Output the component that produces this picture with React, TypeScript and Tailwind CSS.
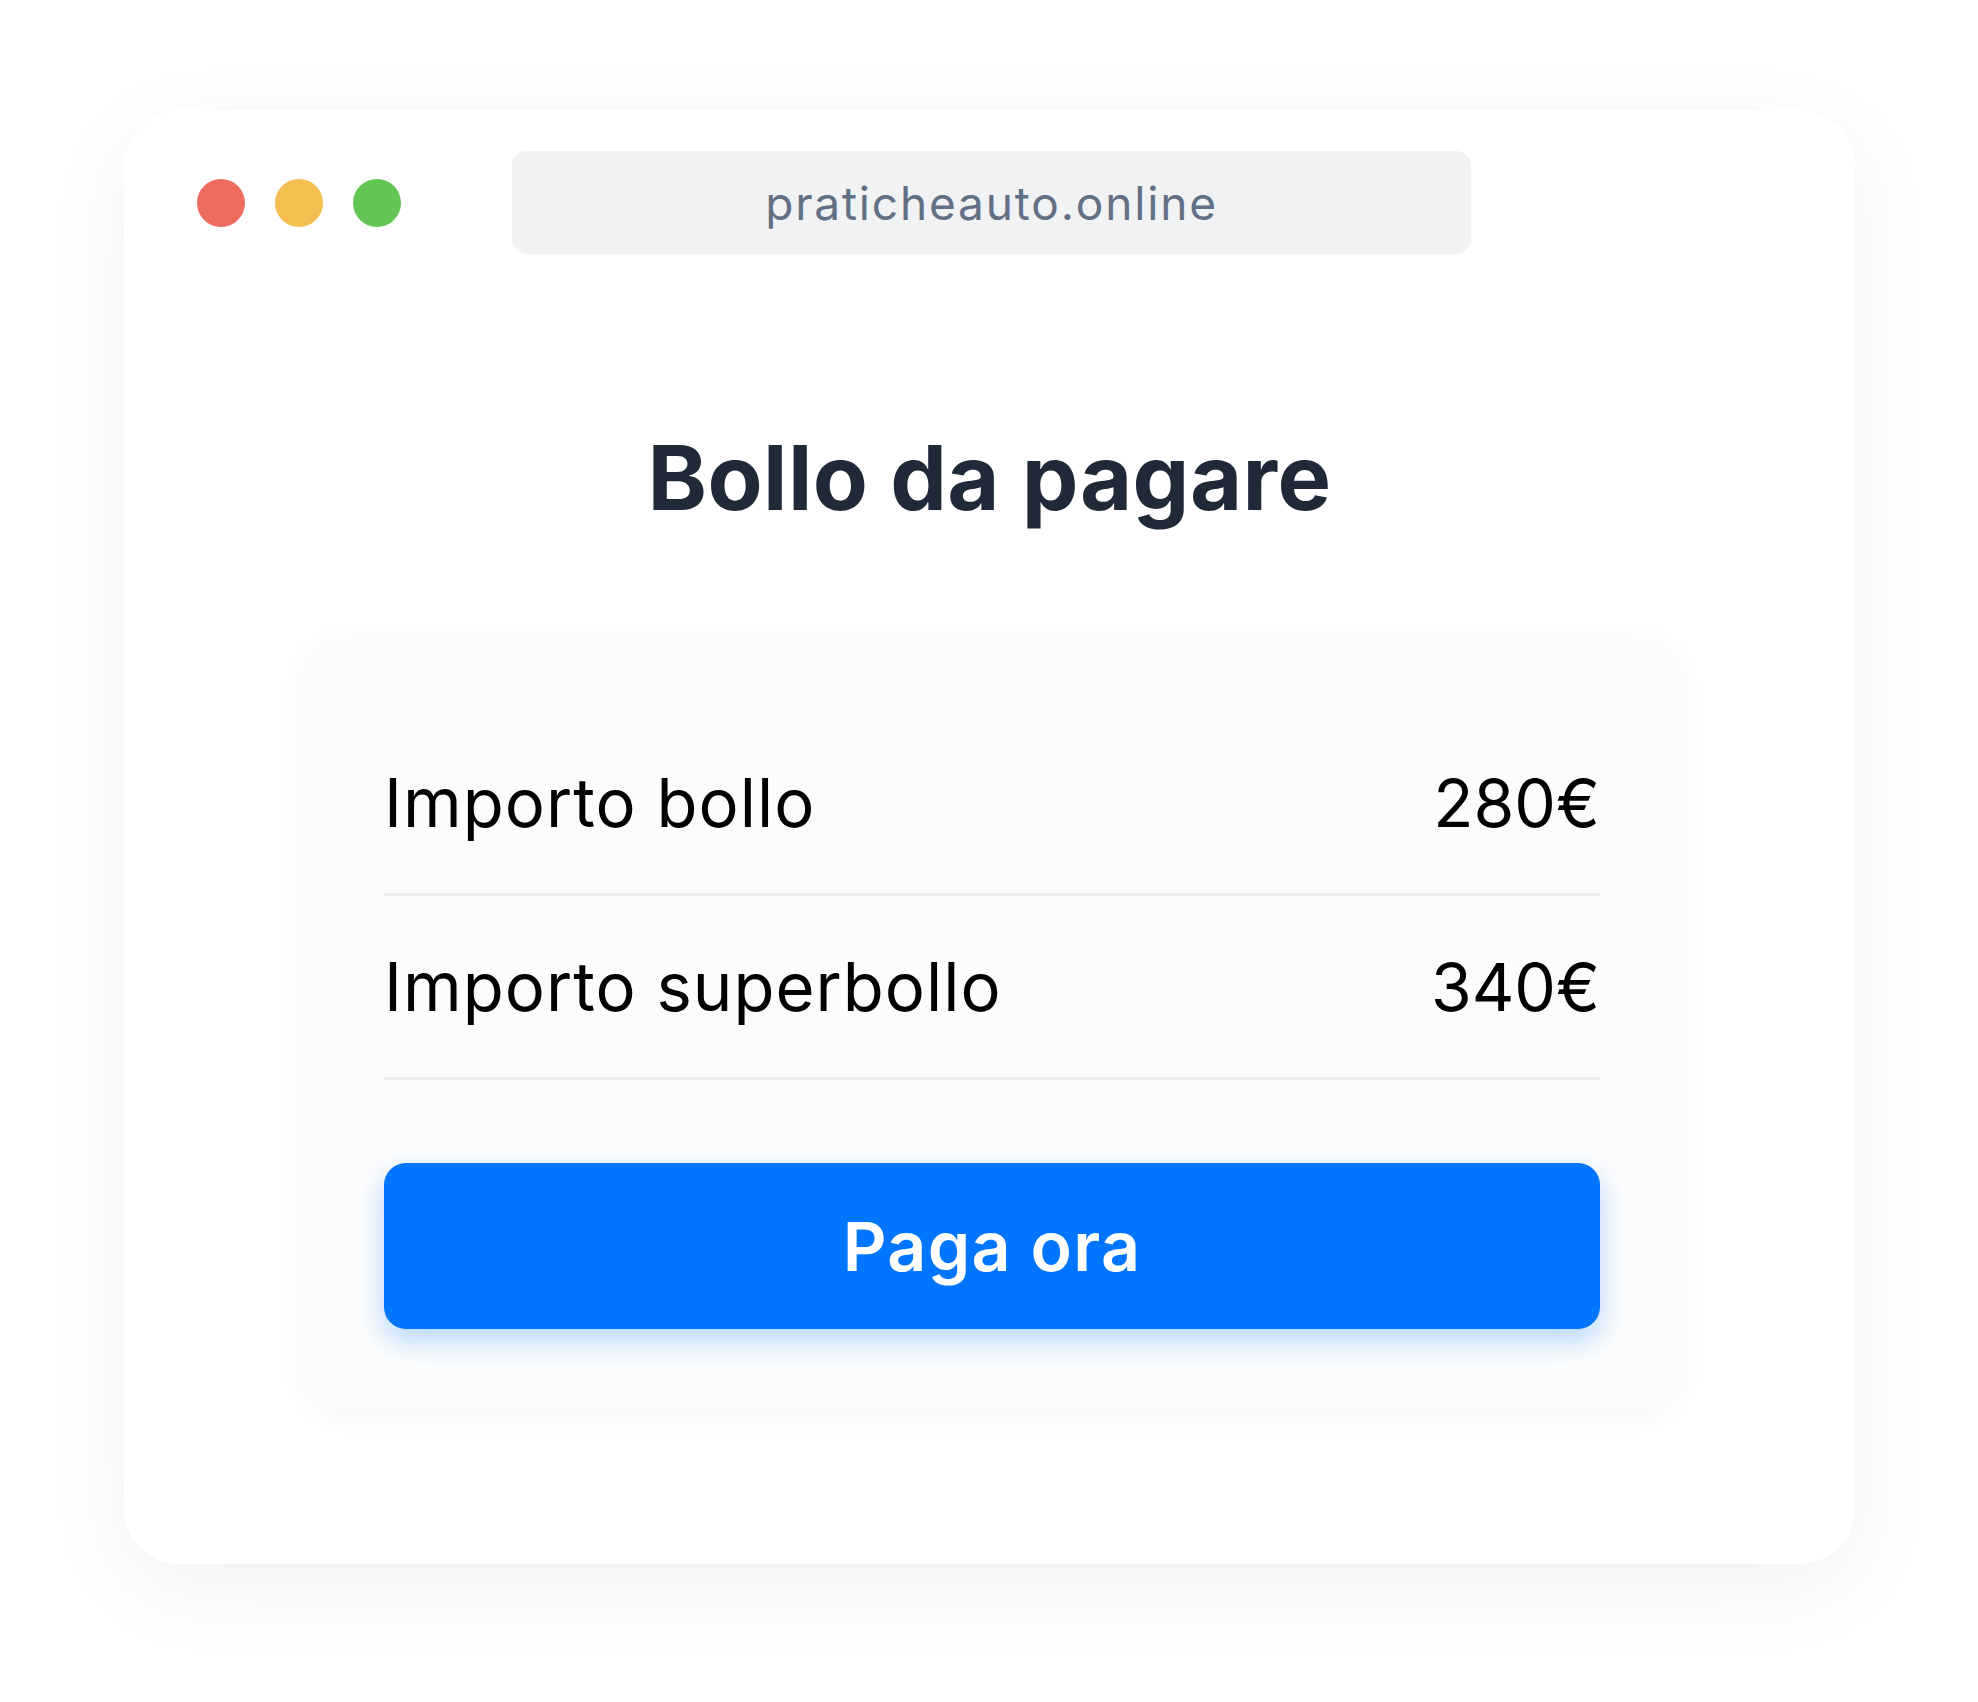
import React from 'react';

const rows = [
  { label: 'Importo bollo', value: '280€' },
  { label: 'Importo superbollo', value: '340€' },
];

const App: React.FC = () => {
  return (
    <div className="min-h-screen w-full bg-white pt-[110px] pl-[124px] font-['Inter','Liberation_Sans',sans-serif]">
      <div className="w-[1731px] h-[1454px] rounded-[56px] bg-white shadow-[0_24px_90px_rgba(0,0,0,0.06)] px-[73px] pt-[41px]">
        {/* browser bar */}
        <div className="flex items-center">
          <div className="flex items-center gap-[30px]">
            <span className="w-12 h-12 rounded-full bg-[#ed6b5f]" />
            <span className="w-12 h-12 rounded-full bg-[#f4bf50]" />
            <span className="w-12 h-12 rounded-full bg-[#62c554]" />
          </div>
          <div className="ml-[111px] w-[959px] h-[103px] rounded-[15px] bg-[#f1f2f4] flex items-center justify-center">
            <span className="text-[46px] leading-none text-[#627085] tracking-[0.04em]">praticheauto.online</span>
          </div>
        </div>

        <h1 className="mt-[179px] text-center text-[90px] leading-none font-bold text-[#1f2937] tracking-[0.005em]">
          Bollo da pagare
        </h1>

        <div className="ml-[107px] mt-[115px] w-[1376px] rounded-[40px] bg-[#fbfcfc] shadow-[0_6px_30px_rgba(0,0,0,0.045)] px-[80px] pt-[74px] pb-[80px]">
          {rows.map((row) => (
            <div
              key={row.label}
              className="flex items-center justify-between h-[184px] border-b-[3px] border-[#eff0f2]"
            >
              <span className="text-[67px] leading-none text-black tracking-[0.015em]">{row.label}</span>
              <span className="text-[66px] leading-none text-black">{row.value}</span>
            </div>
          ))}
          <button className="mt-[83px] w-full h-[166px] rounded-[22px] bg-[#0075ff] text-white text-[68px] font-semibold leading-none tracking-[0.02em] shadow-[0_12px_28px_rgba(0,117,255,0.28)]">
            Paga ora
          </button>
        </div>
      </div>
    </div>
  );
};

export default App;
